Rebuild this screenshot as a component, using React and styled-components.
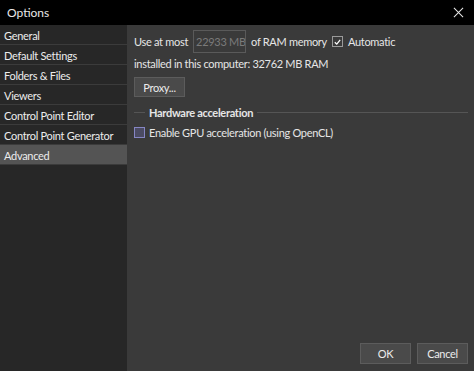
import React from "react";
import styled, { createGlobalStyle } from "styled-components";

const Global = createGlobalStyle`
  html, body {
    margin: 0;
    padding: 0;
    background: #000;
  }
  body {
    font-family: Lato, "Open Sans", sans-serif;
    font-size: 11px;
    letter-spacing: -0.3px;
    color: #e6e6e6;
  }
`;

const pages = [
  "General",
  "Default Settings",
  "Folders & Files",
  "Viewers",
  "Control Point Editor",
  "Control Point Generator",
  "Advanced",
];

const App = () => {
  return (
    <Window>
      <Global />
      <TitleBar>
        <span>Options</span>
        <CloseIcon viewBox="0 0 12 12">
          <path d="M1 1 L11 11 M11 1 L1 11" stroke="#e8e8e8" strokeWidth="1.1" />
        </CloseIcon>
      </TitleBar>
      <Body>
        <Sidebar>
          {pages.map((p) => (
            <NavItem key={p} $active={p === "Advanced"}>
              {p}
            </NavItem>
          ))}
        </Sidebar>
        <Content>
          <Row $gap={5}>
            <span>Use at most</span>
            <NumberBox>22933 MB</NumberBox>
            <span>of RAM memory</span>
            <CheckBox $checked>
              <svg viewBox="0 0 10 10" width="10" height="10">
                <path d="M2 5.2 L4.2 7.4 L8 2.6" stroke="#fff" strokeWidth="1.4" fill="none" />
              </svg>
            </CheckBox>
            <span>Automatic</span>
          </Row>
          <InfoLine>installed in this computer: 32762 MB RAM</InfoLine>
          <Button $w={51} $top={7}>Proxy...</Button>
          <GroupTitle>
            <Rule $w={11} />
            <strong>Hardware acceleration</strong>
            <Rule />
          </GroupTitle>
          <Row $gap={4}>
            <CheckBox $blue />
            <span>Enable GPU acceleration (using OpenCL)</span>
          </Row>
          <Footer>
            <Button $w={51}>OK</Button>
            <Button $w={51}>Cancel</Button>
          </Footer>
        </Content>
      </Body>
    </Window>
  );
};

const Window = styled.div`
  width: 474px;
  height: 371px;
  display: flex;
  flex-direction: column;
  overflow: hidden;
`;

const TitleBar = styled.div`
  height: 25px;
  background: #000;
  display: flex;
  align-items: center;
  justify-content: space-between;
  padding: 0 10px 0 7px;
  font-size: 12px;
  letter-spacing: 0;
  color: #e8e8e8;
`;

const CloseIcon = styled.svg`
  width: 11px;
  height: 11px;
`;

const Body = styled.div`
  flex: 1;
  display: flex;
`;

const Sidebar = styled.div`
  width: 127px;
  background: #272727;
  display: flex;
  flex-direction: column;
`;

const NavItem = styled.div`
  height: 19px;
  line-height: 21px;
  padding-left: 4px;
  border-bottom: 1px solid #3b3b3b;
  white-space: nowrap;
  color: #ececec;
  background: ${({ $active }) => ($active ? "#545454" : "transparent")};
`;

const Content = styled.div`
  flex: 1;
  background: #3a3a3a;
  display: flex;
  flex-direction: column;
  align-items: flex-start;
  padding: 5px 6px 7px 7px;
`;

const Row = styled.div`
  display: flex;
  align-items: center;
  gap: ${({ $gap }) => $gap}px;
  white-space: nowrap;
`;

const NumberBox = styled.div`
  width: 49px;
  height: 21px;
  border: 1px solid #5a5a5a;
  color: #7a7a7a;
  line-height: 21px;
  padding-left: 2px;
  overflow: hidden;
  box-sizing: content-box;
`;

const CheckBox = styled.div`
  width: 9px;
  height: 9px;
  display: flex;
  align-items: center;
  justify-content: center;
  border: 1px solid ${({ $blue }) => ($blue ? "#8686c4" : "#9a9a9a")};
  background: ${({ $blue }) => ($blue ? "#4b4b63" : "#3a3a3a")};
`;

const InfoLine = styled.div`
  margin-top: 4px;
  white-space: nowrap;
`;

const Button = styled.div`
  width: ${({ $w }) => $w}px;
  height: 20px;
  margin-top: ${({ $top }) => $top || 0}px;
  box-sizing: border-box;
  background: #4a4a4a;
  border: 1px solid #5c5c5c;
  display: flex;
  align-items: center;
  justify-content: center;
  color: #ececec;
`;

const GroupTitle = styled.div`
  align-self: stretch;
  display: flex;
  align-items: center;
  gap: 4px;
  margin-top: 9px;
  margin-bottom: 7px;
  strong {
    font-weight: 700;
    white-space: nowrap;
  }
`;

const Rule = styled.div`
  height: 1px;
  background: #555;
  ${({ $w }) => ($w ? `width: ${$w}px;` : "flex: 1;")}
`;

const Footer = styled.div`
  margin-top: auto;
  align-self: stretch;
  display: flex;
  justify-content: flex-end;
  gap: 6px;
  & > div {
    height: 21px;
  }
`;

export default App;
